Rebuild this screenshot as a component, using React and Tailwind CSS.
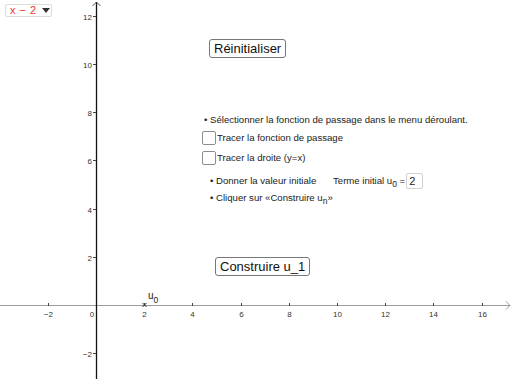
import React from 'react'

const UNIT = 24.1
const OX = 96
const OY = 305

const xTicks = [-2, 2, 4, 6, 8, 10, 12, 14, 16]
const yTicks = [-2, 2, 4, 6, 8, 10, 12]

const label = (n) => (n < 0 ? `\u2212${-n}` : `${n}`)

const Graph = () => (
    <svg className="absolute inset-0" width="512" height="379" viewBox="0 0 512 379">
        {/* x axis */}
        <line x1="0" y1={OY + 0.5} x2="510" y2={OY + 0.5} stroke="#9a9a9a" strokeWidth="1" />
        <polyline points={`506,${OY - 3.5} 510,${OY + 0.5} 506,${OY + 4.5}`} fill="none" stroke="#9a9a9a" strokeWidth="1" />
        {xTicks.map((k) => {
            const x = Math.round(OX + UNIT * k) + 0.5
            return (
                <g key={k}>
                    <line x1={x} y1={OY - 2} x2={x} y2={OY + 1} stroke="#444" strokeWidth="1" />
                    <text x={x} y={OY + 12} fontSize="8" fill="#333" textAnchor="middle" fontFamily="Liberation Sans, Arial, sans-serif">
                        {label(k)}
                    </text>
                </g>
            )
        })}
        <text x={OX - 4} y={OY + 12} fontSize="8" fill="#333" textAnchor="middle" fontFamily="Liberation Sans, Arial, sans-serif">0</text>

        {/* y axis */}
        <line x1={OX + 0.5} y1="2" x2={OX + 0.5} y2="379" stroke="#111" strokeWidth="1.3" />
        <polyline points={`${OX - 3.5},6 ${OX + 0.5},2 ${OX + 4.5},6`} fill="none" stroke="#555" strokeWidth="1" />
        {yTicks.map((k) => {
            const y = Math.round(OY - UNIT * k) + 0.5
            return (
                <g key={k}>
                    <line x1={OX - 3} y1={y} x2={OX} y2={y} stroke="#444" strokeWidth="1" />
                    <text x={OX - 4} y={y + 3} fontSize="8" fill="#333" textAnchor="end" fontFamily="Liberation Sans, Arial, sans-serif">
                        {label(k)}
                    </text>
                </g>
            )
        })}

        {/* point u0 */}
        <g stroke="#333" strokeWidth="1">
            <line x1="142.5" y1="303" x2="146.5" y2="307" />
            <line x1="146.5" y1="303" x2="142.5" y2="307" />
        </g>
        <text x="148" y="299" fontSize="10" fill="#222" fontFamily="Liberation Sans, Arial, sans-serif">
            u<tspan fontSize="8.5" dy="3.5">0</tspan>
        </text>
    </svg>
)

const Checkbox = () => (
    <span className="inline-block w-[14px] h-[14px] rounded-[2px] border border-[#8c8c8c] bg-white" />
)

const Sub = ({ children }) => (
    <span className="text-[8.5px] relative top-[3px]">{children}</span>
)

export default function App() {
    return (
        <div className="relative w-[512px] h-[379px] bg-white overflow-hidden font-['Liberation_Sans',Arial,sans-serif] text-[#222]">
            <Graph />

            {/* function dropdown */}
            <div className="absolute left-[5px] top-[4px] w-[47px] h-[13px] flex items-center gap-[5px] pl-[4px] border border-[#dcdcdc] rounded-[2px] bg-white">
                <span className="text-[11px] leading-none text-[#ee3333] tracking-[0.5px]">x − 2</span>
                <span className="w-0 h-0 border-l-[4px] border-r-[4px] border-t-[5px] border-l-transparent border-r-transparent border-t-[#333]" />
            </div>

            {/* reset button */}
            <div className="absolute left-[209px] top-[39px] h-[19px] px-[4px] flex items-center border border-[#777] rounded-[3px] bg-white text-[13px] leading-none text-[#111]">
                Réinitialiser
            </div>

            {/* instructions */}
            <div className="absolute left-[202px] top-[114px] flex flex-col text-[9.6px] leading-[12px] whitespace-nowrap">
                <div className="h-[12px] pl-[2px]">
                    • Sélectionner la fonction de passage dans le menu déroulant.
                </div>
                <div className="mt-[5px] h-[14px] flex items-center gap-[1px]">
                    <Checkbox />
                    <span>Tracer la fonction de passage</span>
                </div>
                <div className="mt-[6px] h-[14px] flex items-center gap-[1px]">
                    <Checkbox />
                    <span>Tracer la droite (y=x)</span>
                </div>
                <div className="mt-[8px] h-[16px] flex items-center pl-[8px]">
                    <span className="w-[123px]">• Donner la valeur initiale</span>
                    <span>
                        Terme initial u<Sub>0</Sub> =
                    </span>
                    <span className="ml-[1px] w-[17px] h-[16px] flex items-center pl-[2px] border border-[#cfcfcf] rounded-[2px] text-[11px] leading-none bg-white">2</span>
                </div>
                <div className="mt-[3px] h-[12px] pl-[8px]">
                    • Cliquer sur «Construire u<Sub>n</Sub>»
                </div>
            </div>

            {/* build button */}
            <div className="absolute left-[215px] top-[257px] h-[19px] px-[4px] flex items-center border border-[#777] rounded-[3px] bg-white text-[13px] leading-none text-[#111]">
                Construire u_1
            </div>
        </div>
    )
}
